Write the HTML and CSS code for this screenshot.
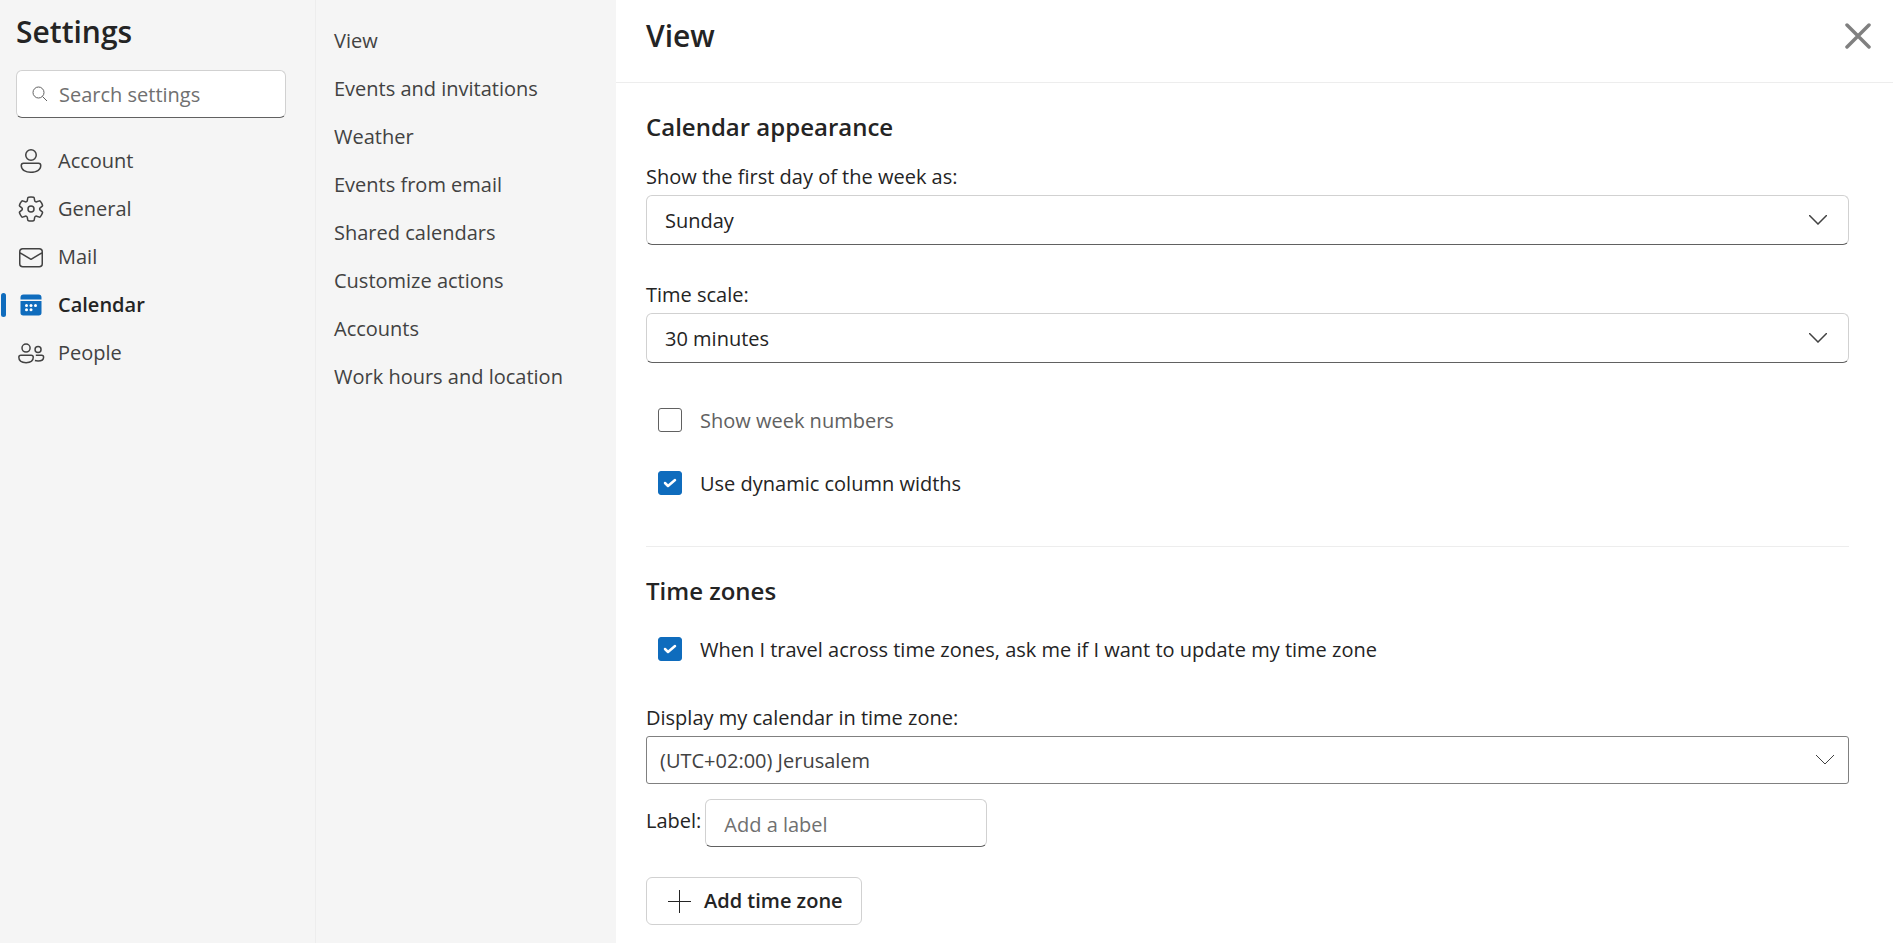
FILE: index.html
```html
<!DOCTYPE html>
<html lang="en">
<head>
  <meta charset="UTF-8">
  <title>Settings</title>
  <meta name="viewport" content="width=device-width, initial-scale=1.0">
  <link rel="stylesheet" href="styles.css">
</head>
<body>

  <div class="settings">
    <aside class="sidebar">
      <h1 class="sidebar-title">Settings</h1>

      <label class="search">
        <svg class="search-icon" viewBox="0 0 16 16" aria-hidden="true">
          <circle cx="6.5" cy="6.5" r="5.5"/>
          <path d="M10.5 10.5 15 15"/>
        </svg>
        <input type="search" placeholder="Search settings" aria-label="Search settings">
      </label>

      <nav class="main-nav">
        <a href="#">
          <svg class="icon solid" viewBox="0 0 20 20" aria-hidden="true"><path d="M10 2a4 4 0 1 0 0 8 4 4 0 0 0 0-8ZM7 6a3 3 0 1 1 6 0 3 3 0 0 1-6 0Zm-2 5a2 2 0 0 0-2 2c0 1.7.83 2.97 2.13 3.8A9.14 9.14 0 0 0 10 18c1.85 0 3.58-.39 4.87-1.2A4.35 4.35 0 0 0 17 13a2 2 0 0 0-2-2H5Zm-1 2a1 1 0 0 1 1-1h10a1 1 0 0 1 1 1c0 1.3-.62 2.28-1.67 2.95A8.16 8.16 0 0 1 10 17a8.16 8.16 0 0 1-4.33-1.05A3.36 3.36 0 0 1 4 13Z"/></svg>
          Account
        </a>
        <a href="#">
          <svg class="icon" viewBox="0 0 20 20" aria-hidden="true">
            <path d="M2.300 7.500A8.100 8.100 0 0 1 3.900 4.700a.5.5 0 0 1 .5-.1l1.800.6a1 1 0 0 0 1.320-.76l.34-1.900a.5.5 0 0 1 .4-.4 8.200 8.200 0 0 1 3.480 0c.2.040.35.2.38.4l.34 1.900a1 1 0 0 0 1.320.76l1.800-.6a.5.5 0 0 1 .5.1 8.100 8.100 0 0 1 1.600 2.800.5.5 0 0 1-.15.54l-1.430 1.200a1 1 0 0 0 0 1.520l1.430 1.200a.5.5 0 0 1 .15.54 8.100 8.100 0 0 1-1.600 2.800.5.5 0 0 1-.5.1l-1.800-.6a1 1 0 0 0-1.320.76l-.34 1.900a.5.5 0 0 1-.38.4 8.200 8.200 0 0 1-3.480 0 .5.5 0 0 1-.4-.4l-.34-1.900a1 1 0 0 0-1.320-.76l-1.800.6a.5.5 0 0 1-.5-.1 8.100 8.100 0 0 1-1.600-2.800.5.5 0 0 1 .15-.54l1.430-1.200a1 1 0 0 0 0-1.520L2.450 8.040a.5.5 0 0 1-.15-.54Z"/>
            <circle cx="10" cy="10" r="2"/>
          </svg>
          General
        </a>
        <a href="#">
          <svg class="icon solid" viewBox="0 0 20 20" aria-hidden="true"><path d="M15.5 4A2.5 2.5 0 0 1 18 6.5v8a2.5 2.5 0 0 1-2.5 2.5h-11A2.5 2.5 0 0 1 2 14.5v-8A2.5 2.5 0 0 1 4.5 4h11ZM17 7.96l-6.75 3.97a.5.5 0 0 1-.42.03l-.08-.03L3 7.96v6.54c0 .83.67 1.5 1.5 1.5h11c.83 0 1.5-.67 1.5-1.5V7.96ZM15.5 5h-11C3.67 5 3 5.67 3 6.5v.3l7 4.12 7-4.12v-.3c0-.83-.67-1.5-1.5-1.5Z"/></svg>
          Mail
        </a>
        <a href="#" class="active" aria-current="page">
          <svg class="icon solid" viewBox="0 0 20 20" aria-hidden="true">
            <path d="M17 7.4v7.8a1.8 1.8 0 0 1-1.8 1.8H4.8A1.8 1.8 0 0 1 3 15.2V7.4h14ZM15 3a2 2 0 0 1 2 2v1.400H3V5a2 2 0 0 1 2-2h10Z"/>
            <g class="dots">
              <circle cx="7" cy="10.300" r="1"/><circle cx="10" cy="10.300" r="1"/><circle cx="13" cy="10.300" r="1"/>
              <circle cx="7" cy="13.200" r="1"/><circle cx="10" cy="13.200" r="1"/>
            </g>
          </svg>
          Calendar
        </a>
        <a href="#">
          <svg class="icon" viewBox="0 0 20 20" aria-hidden="true">
            <circle cx="6.700" cy="6.700" r="2.700"/>
            <circle cx="14.700" cy="7.600" r="2"/>
            <path d="M3.300 11.500h6.800a1.400 1.400 0 0 1 1.400 1.400c0 2.200-1.800 3.600-4.800 3.600s-4.800-1.400-4.800-3.600a1.400 1.400 0 0 1 1.400-1.400Z"/>
            <path d="M13.200 11.500h3.900a1.300 1.300 0 0 1 1.300 1.300c0 1.600-1.400 2.500-3.700 2.500-.8 0-1.500-.1-2.100-.3"/>
          </svg>
          People
        </a>
      </nav>
    </aside>

    <nav class="sub-nav">
      <a href="#">View</a>
      <a href="#">Events and invitations</a>
      <a href="#">Weather</a>
      <a href="#">Events from email</a>
      <a href="#">Shared calendars</a>
      <a href="#">Customize actions</a>
      <a href="#">Accounts</a>
      <a href="#">Work hours and location</a>
    </nav>

    <main class="panel">
      <header class="panel-header">
        <h2>View</h2>
        <button type="button" class="close" aria-label="Close">
          <svg viewBox="0 0 26 26" aria-hidden="true"><path d="M2 2l22 22M24 2L2 24"/></svg>
        </button>
      </header>

      <section class="section">
        <h3>Calendar appearance</h3>

        <div class="field">
          <label for="firstDay">Show the first day of the week as:</label>
          <div class="select">
            <select id="firstDay">
              <option>Sunday</option>
              <option>Monday</option>
            </select>
            <svg class="chevron" viewBox="0 0 18 10" aria-hidden="true"><path d="M0 0l9 9 9-9"/></svg>
          </div>
        </div>

        <div class="field">
          <label for="timeScale">Time scale:</label>
          <div class="select">
            <select id="timeScale">
              <option>30 minutes</option>
              <option>15 minutes</option>
            </select>
            <svg class="chevron" viewBox="0 0 18 10" aria-hidden="true"><path d="M0 0l9 9 9-9"/></svg>
          </div>
        </div>

        <div class="checks">
          <label class="check">
            <span class="box">
              <input type="checkbox">
              <svg class="tick" viewBox="0 0 14 10" aria-hidden="true"><path d="M2 5l3 3 6-6"/></svg>
            </span>
            <span class="check-text">Show week numbers</span>
          </label>
          <label class="check">
            <span class="box">
              <input type="checkbox" checked>
              <svg class="tick" viewBox="0 0 14 10" aria-hidden="true"><path d="M2 5l3 3 7-6"/></svg>
            </span>
            <span class="check-text">Use dynamic column widths</span>
          </label>
        </div>
      </section>

      <section class="section zones">
        <h3>Time zones</h3>

        <label class="check">
          <span class="box">
            <input type="checkbox" checked>
            <svg class="tick" viewBox="0 0 14 10" aria-hidden="true"><path d="M2 5l3 3 7-6"/></svg>
          </span>
          <span class="check-text">When I travel across time zones, ask me if I want to update my time zone</span>
        </label>

        <div class="field">
          <label for="timeZone">Display my calendar in time zone:</label>
          <div class="select select-plain">
            <select id="timeZone">
              <option>(UTC+02:00) Jerusalem</option>
            </select>
            <svg class="chevron" viewBox="0 0 18 10" aria-hidden="true"><path d="M0 0l9 9 9-9"/></svg>
          </div>
        </div>

        <div class="zone-label">
          <label for="zoneLabel">Label:</label>
          <input type="text" id="zoneLabel" placeholder="Add a label">
        </div>

        <button type="button" class="add">
          <svg viewBox="0 0 23 23" aria-hidden="true"><path d="M11.5 0v23M0 11.5h23"/></svg>
          Add time zone
        </button>
      </section>
    </main>
  </div>

</body>
</html>
```
FILE: styles.css
```css
* {
  box-sizing: border-box;
}

body {
  margin: 0;
  background-color: #fff;
  color: #242424;
  font-family: "Open Sans", "Noto Sans", sans-serif;
  font-size: 20px;
  line-height: 28px;
}

h1,
h2,
h3 {
  margin: 0;
  font-weight: 600;
}

a {
  color: inherit;
  text-decoration: none;
}

input,
select,
button {
  font: inherit;
  color: inherit;
}

svg {
  display: block;
  flex: none;
  fill: none;
  stroke: currentColor;
}

.settings {
  display: flex;
  min-height: 100vh;
}

/* left column */
.sidebar {
  flex: 0 0 316px;
  padding-top: 12px;
  background-color: #f5f5f5;
  border-right: 1px solid #ededed;
}

.sidebar-title {
  padding-left: 16px;
  font-size: 30px;
  line-height: 40px;
}

.search {
  display: flex;
  align-items: center;
  gap: 11px;
  height: 48px;
  margin: 18px 29px 19px 16px;
  padding: 0 15px;
  background-color: #fff;
  border: 1px solid #d1d1d1;
  border-bottom-color: #616161;
  border-radius: 6px;
  color: #616161;
}

.search-icon {
  width: 16px;
  height: 16px;
}

.search input {
  width: 100%;
  min-width: 0;
  padding: 2px 0 0;
  border: none;
  outline: none;
  background: none;
}

::placeholder {
  color: #707070;
  opacity: 1;
}

.main-nav a {
  position: relative;
  display: flex;
  align-items: center;
  gap: 12px;
  height: 48px;
  padding-left: 16px;
  color: #424242;
}

.main-nav .active {
  color: #242424;
  font-weight: 600;
}

.main-nav .active::before {
  content: "";
  position: absolute;
  left: 1px;
  width: 5px;
  height: 24px;
  border-radius: 3px;
  background-color: #0f6cbd;
}

.icon {
  width: 30px;
  height: 30px;
}

.solid {
  fill: currentColor;
  stroke: none;
}

.active .icon {
  color: #0f6cbd;
}

.dots {
  fill: #fff;
}

/* second column */
.sub-nav {
  flex: 0 0 300px;
  padding: 17px 0 0 18px;
  background-color: #f5f5f5;
  color: #424242;
}

.sub-nav a {
  display: block;
  line-height: 48px;
}

/* content */
.panel {
  flex: 1;
  min-width: 0;
}

.panel-header {
  display: flex;
  align-items: center;
  justify-content: space-between;
  height: 83px;
  padding: 0 22px 10px 30px;
  border-bottom: 1px solid #ededed;
}

.panel-header h2 {
  font-size: 30px;
  line-height: 40px;
}

.close {
  padding: 0;
  border: none;
  background: none;
  color: #808080;
  cursor: pointer;
}

.close svg {
  width: 26px;
  height: 26px;
  stroke-width: 3.5;
  stroke-linecap: round;
}

.section {
  margin: 0 44px 0 30px;
  padding-top: 28px;
}

.section h3 {
  font-size: 24px;
  line-height: 32px;
}

.field {
  margin-top: 18px;
}

.field + .field {
  margin-top: 34px;
}

.field > label {
  display: block;
  margin-bottom: 2px;
  line-height: 32px;
}

.select {
  display: grid;
  align-items: center;
}

.select select {
  grid-area: 1 / 1;
  width: 100%;
  height: 50px;
  padding: 2px 18px 0;
  appearance: none;
  background-color: #fff;
  border: 1px solid #d1d1d1;
  border-bottom-color: #616161;
  border-radius: 6px;
}

.chevron {
  grid-area: 1 / 1;
  justify-self: end;
  width: 18px;
  height: 10px;
  margin-right: 22px;
  color: #424242;
  stroke-width: 1.5;
  pointer-events: none;
}

.select-plain select {
  height: 48px;
  padding: 2px 13px 0;
  border-color: #808080;
  border-radius: 3px;
  color: #424242;
}

.select-plain .chevron {
  margin-right: 15px;
  stroke-width: 1;
}

.checks {
  display: grid;
  gap: 35px;
  padding: 43px 0 49px;
}

.check {
  display: flex;
  align-items: center;
  gap: 18px;
  padding-left: 12px;
}

.check-text {
  padding-top: 2px;
  line-height: 26px;
}

.box {
  display: grid;
  place-items: center;
}

.box input {
  grid-area: 1 / 1;
  width: 24px;
  height: 24px;
  margin: 0;
  appearance: none;
  background-color: #fff;
  border: 1px solid #616161;
  border-radius: 3px;
}

.box input:checked {
  background-color: #0f6cbd;
  border-color: #0f6cbd;
}

.tick {
  grid-area: 1 / 1;
  width: 14px;
  height: 10px;
  color: #fff;
  stroke-width: 2.5;
  stroke-linecap: round;
  stroke-linejoin: round;
  pointer-events: none;
}

.box:has(input:not(:checked)) + .check-text {
  color: #616161;
}

.zones {
  border-top: 1px solid #ededed;
}

.zones .check {
  margin-top: 28px;
}

.zones .field {
  margin-top: 39px;
}

.zone-label {
  display: flex;
  align-items: center;
  gap: 4px;
  margin-top: 15px;
}

.zone-label label {
  padding-bottom: 4px;
}

.zone-label input {
  width: 282px;
  height: 48px;
  padding: 2px 18px 0;
  border: 1px solid #d1d1d1;
  border-bottom-color: #616161;
  border-radius: 6px;
}

.add {
  display: flex;
  align-items: center;
  gap: 13px;
  height: 48px;
  margin-top: 30px;
  padding: 0 18px 0 21px;
  background-color: #fff;
  border: 1px solid #d1d1d1;
  border-radius: 6px;
  font-weight: 600;
  cursor: pointer;
}

.add svg {
  width: 23px;
  height: 23px;
}
```
